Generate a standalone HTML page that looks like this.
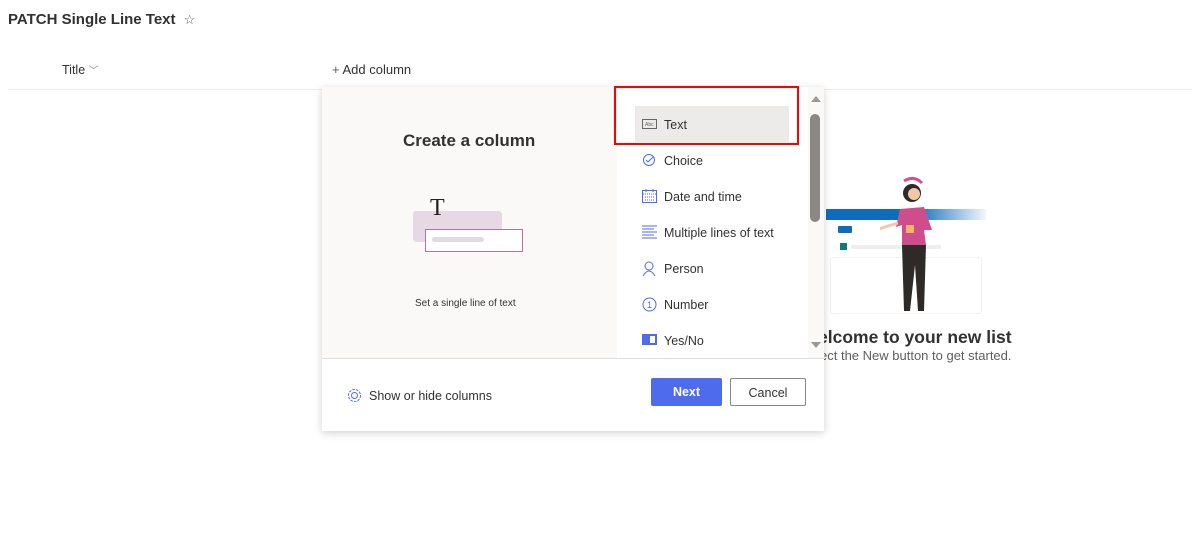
<!DOCTYPE html>
<html><head><style>
body{margin:0;width:1192px;height:545px;background:#fff;font-family:"Segoe UI","Liberation Sans",sans-serif;color:#323130;position:relative;overflow:hidden}
.a{position:absolute}
.it{position:absolute;left:642px;font-size:12.5px;color:#323130}
.it span{position:absolute;left:22px;top:-7px;white-space:nowrap}
</style></head><body>
<div class="a" style="left:8px;top:11px;font-size:15px;font-weight:600;color:#323130">PATCH Single Line Text <span style="font-weight:400;font-size:13px;color:#605e5c;margin-left:4px">☆</span></div>
<div class="a" style="left:62px;top:62px;font-size:12.5px;color:#323130">Title <span style="color:#8a8886;font-size:10px">﹀</span></div>
<div class="a" style="left:332px;top:62px;font-size:13px;color:#323130"><span style="color:#605e5c">+</span> Add column</div>
<div class="a" style="left:8px;top:89px;width:1184px;height:1px;background:#edebe9"></div>

<!-- welcome illustration -->
<div class="a" style="left:826px;top:209px;width:160px;height:11px;background:linear-gradient(90deg,#0f6cbd 55%,rgba(15,108,189,0.05))"></div>
<div class="a" style="left:838px;top:226px;width:14px;height:7px;background:#0f6cbd;border-radius:1px"></div>
<div class="a" style="left:840px;top:243px;width:7px;height:7px;background:#0f7a7a"></div>
<div class="a" style="left:851px;top:245px;width:90px;height:4px;background:#eee"></div>
<div class="a" style="left:830px;top:257px;width:150px;height:55px;border:1px solid #f3f2f1;border-radius:3px"></div>
<svg class="a" style="left:880px;top:175px" width="70" height="140">
<circle cx="32" cy="18" r="9" fill="#2d2a27"/><circle cx="34" cy="19" r="6" fill="#f2c9a8"/>
<path d="M24 6 q10 -6 18 2" stroke="#d44c9c" stroke-width="3" fill="none"/>
<path d="M20 34 L44 32 L52 55 L44 55 L46 70 L22 70 L22 50 L16 52 Z" fill="#d04d8c"/>
<path d="M22 70 L46 70 L44 136 L38 136 L35 90 L30 136 L24 136 Z" fill="#2d2a27"/>
<path d="M18 48 L-8 56" stroke="#f2c9a8" stroke-width="3"/>
<rect x="26" y="50" width="8" height="8" fill="#f4b46a"/>
</svg>
<div class="a" style="left:818px;top:327px;font-size:17.5px;font-weight:600;color:#323130">elcome to your new list</div>
<div class="a" style="left:820px;top:348px;font-size:13px;color:#605e5c">ect the New button to get started.</div>

<!-- dialog -->
<div class="a" style="left:322px;top:87px;width:502px;height:344px;background:#fff;box-shadow:0 2px 8px rgba(0,0,0,0.18)">
 <div class="a" style="left:0;top:0;width:295px;height:271px;background:#faf9f8"></div>
 <div class="a" style="left:0;top:271px;width:502px;height:1px;background:#e1dfdd"></div>
 <div class="a" style="left:486px;top:0;width:16px;height:271px;background:#faf9f8"></div>
</div>
<div class="a" style="left:403px;top:131px;font-size:17px;font-weight:600;color:#323130">Create a column</div>
<div class="a" style="left:413px;top:211px;width:89px;height:31px;background:#e6d9e4;border-radius:3px"></div>
<div class="a" style="left:425px;top:229px;width:96px;height:21px;background:#fff;border:1px solid #a87aa3"></div>
<div class="a" style="left:432px;top:237px;width:52px;height:5px;background:#ddd;border-radius:3px"></div>
<div class="a" style="left:430px;top:195px;font-family:'Liberation Serif',serif;font-size:24px;color:#222">T</div>
<div class="a" style="left:415px;top:298px;font-size:10px;color:#323130">Set a single line of text</div>

<div class="a" style="left:635px;top:106px;width:154px;height:36px;background:#edebe9"></div>
<div class="a" style="left:614px;top:86px;width:181px;height:55px;border:2px solid #f00"></div>
<div class="it" style="top:125px"><svg width="15" height="10" style="position:absolute;top:-6px"><rect x=".5" y=".5" width="14" height="9" fill="none" stroke="#666"/><text x="3" y="7" font-size="5" fill="#666">Abc</text></svg><span>Text</span></div>
<div class="it" style="top:161px"><svg width="14" height="14" style="position:absolute;top:-8px"><circle cx="7" cy="7" r="5.5" fill="none" stroke="#4f6bed"/><path d="M4 7l2 2 5-5" stroke="#4f6bed" fill="none"/></svg><span>Choice</span></div>
<div class="it" style="top:197px"><svg width="15" height="14" style="position:absolute;top:-8px"><rect x=".5" y="1.5" width="14" height="12" fill="none" stroke="#4f6bed"/><path d="M1 5h13M4 0v3M11 0v3M3 8h9M3 11h9" stroke="#4f6bed" stroke-dasharray="1 1"/></svg><span>Date and time</span></div>
<div class="it" style="top:233px"><svg width="15" height="14" style="position:absolute;top:-8px"><path d="M0 1h15M0 4h12M0 7h15M0 10h12M0 13h15" stroke="#4f6bed"/></svg><span>Multiple lines of text</span></div>
<div class="it" style="top:269px"><svg width="14" height="15" style="position:absolute;top:-8px"><circle cx="7" cy="5" r="4" fill="none" stroke="#4f6bed"/><path d="M1 15q6-10 12 0" fill="none" stroke="#4f6bed"/></svg><span>Person</span></div>
<div class="it" style="top:305px"><svg width="15" height="15" style="position:absolute;top:-8px"><circle cx="7.5" cy="7.5" r="6.5" fill="none" stroke="#4f6bed"/><text x="5" y="11" font-size="9" fill="#4f6bed">1</text></svg><span>Number</span></div>
<div class="it" style="top:341px"><svg width="15" height="11" style="position:absolute;top:-7px"><rect x="0" y="0" width="15" height="11" fill="#4f6bed"/><rect x="8" y="2" width="5" height="7" fill="#fff"/></svg><span>Yes/No</span></div>

<div class="a" style="left:811px;top:96px;width:0;height:0;border:5px solid transparent;border-bottom:6px solid #999;border-top:0"></div>
<div class="a" style="left:810px;top:114px;width:10px;height:108px;background:#8a8886;border-radius:5px"></div>
<div class="a" style="left:811px;top:342px;width:0;height:0;border:5px solid transparent;border-top:6px solid #999;border-bottom:0"></div>

<svg class="a" style="left:347px;top:388px" width="15" height="15"><circle cx="7.5" cy="7.5" r="3" fill="none" stroke="#4f6bed"/><circle cx="7.5" cy="7.5" r="6" fill="none" stroke="#4f6bed" stroke-dasharray="2.5 1.2"/></svg>
<div class="a" style="left:369px;top:389px;font-size:12.5px;color:#323130">Show or hide columns</div>
<div class="a" style="left:651px;top:378px;width:71px;height:28px;background:#4f6bed;border-radius:2px;color:#fff;font-size:12.5px;font-weight:600;text-align:center;line-height:29px">Next</div>
<div class="a" style="left:730px;top:378px;width:74px;height:26px;border:1px solid #8a8886;border-radius:2px;font-size:12.5px;text-align:center;line-height:28px">Cancel</div>
</body></html>
